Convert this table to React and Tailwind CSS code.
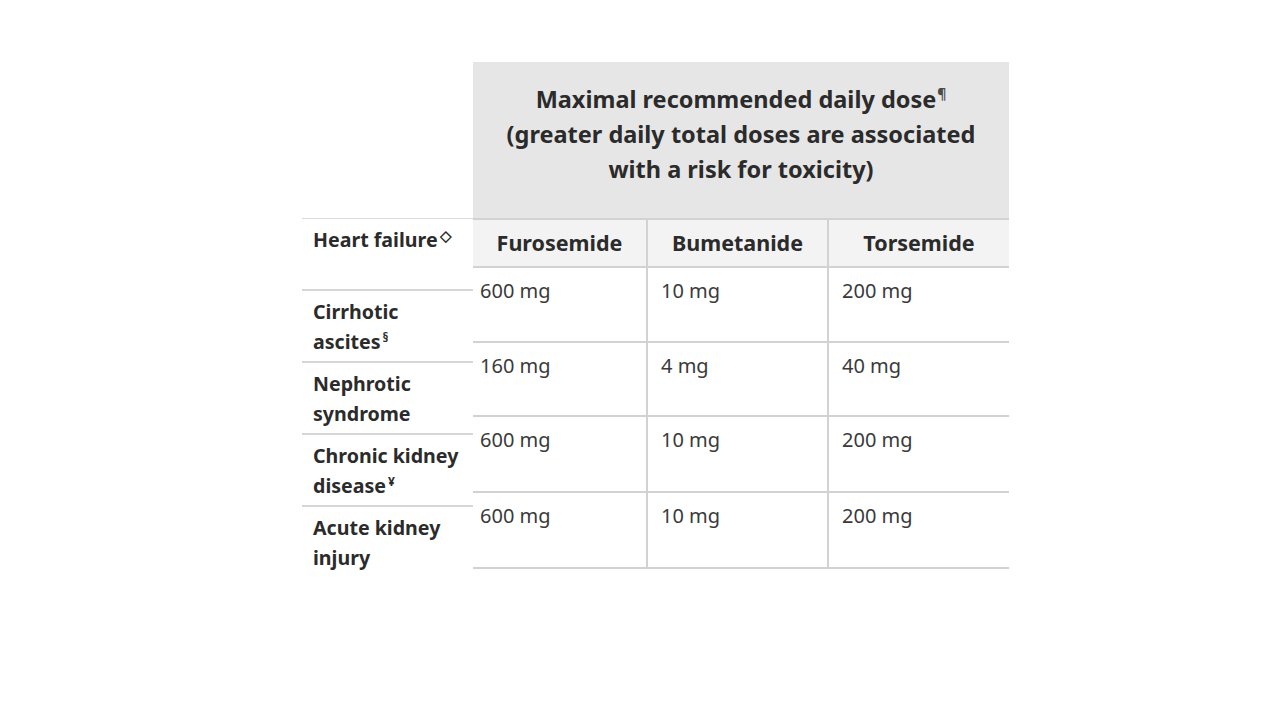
const conditions = [
  { name: "Heart failure", mark: "◇" },
  { name: "Cirrhotic ascites", mark: "§" },
  { name: "Nephrotic syndrome", mark: null },
  { name: "Chronic kidney disease", mark: "¥" },
  { name: "Acute kidney injury", mark: null },
];

const drugs = ["Furosemide", "Bumetanide", "Torsemide"];

const doses = [
  { h: "h-[75px]", vals: ["600 mg", "10 mg", "200 mg"] },
  { h: "h-[74px]", vals: ["160 mg", "4 mg", "40 mg"] },
  { h: "h-[76px]", vals: ["600 mg", "10 mg", "200 mg"] },
  { h: "h-[76px]", vals: ["600 mg", "10 mg", "200 mg"] },
];

const colW = ["w-[175px]", "w-[181px]", "w-[180px]"];
const colPad = ["pl-[7px]", "pl-[13px]", "pl-[13px]"];

export default function App() {
  return (
    <div className="min-h-screen bg-white pt-[62px] pl-[302px] text-[#333] font-['Noto_Sans',sans-serif]">
      <div className="flex">
        {/* row labels */}
        <div className="w-[171px] pt-[156px]">
          <div className="border-t border-[#dcdcdc]">
            {conditions.map((c, i) => (
              <div
                key={c.name}
                className={
                  "h-[72px] pl-[11px] pr-1 pt-[6px] text-[19.6px] leading-[30px] font-bold text-[#2b2b2b] " +
                  (i < conditions.length - 1 ? "border-b-2 border-[#d6d6d6]" : "")
                }
              >
                {c.name}
                {c.mark && (
                  <span
                    className={
                      "relative ml-[2px] leading-none font-bold " +
                      (i === 0 ? "-top-[6px] text-[15px]" : "-top-[7px] text-[12px]")
                    }
                  >
                    {c.mark}
                  </span>
                )}
              </div>
            ))}
          </div>
        </div>

        {/* dose table */}
        <div className="w-[536px]">
          <div className="h-[156px] bg-[#e6e6e6] flex items-center justify-center text-center pb-[12px]">
            <div className="text-[23.5px] leading-[35px] font-bold text-[#2b2b2b]">
              <div>
                Maximal recommended daily dose
                <span className="relative -top-[9px] ml-[1px] text-[14px] leading-none font-bold text-[#4a4a4a]">¶</span>
              </div>
              <div>(greater daily total doses are associated</div>
              <div>with a risk for toxicity)</div>
            </div>
          </div>
          <div className="flex h-[50px] bg-[#f3f3f3] border-y-2 border-[#d2d2d2]">
            {drugs.map((d, i) => (
              <div
                key={d}
                className={
                  colW[i] +
                  " flex items-center justify-center text-[21.5px] font-bold text-[#2b2b2b] " +
                  (i < 2 ? "border-r-2 border-[#d2d2d2]" : "")
                }
              >
                {d}
              </div>
            ))}
          </div>
          {doses.map((r, ri) => (
            <div key={ri} className={"flex border-b-2 border-[#d2d2d2] " + r.h}>
              {r.vals.map((v, i) => (
                <div
                  key={i}
                  className={
                    colW[i] +
                    " " +
                    colPad[i] +
                    " pt-[8px] text-[20px] leading-[30px] text-[#3a3a3a] " +
                    (i < 2 ? "border-r-2 border-[#d2d2d2]" : "")
                  }
                >
                  {v}
                </div>
              ))}
            </div>
          ))}
        </div>
      </div>
    </div>
  );
}
